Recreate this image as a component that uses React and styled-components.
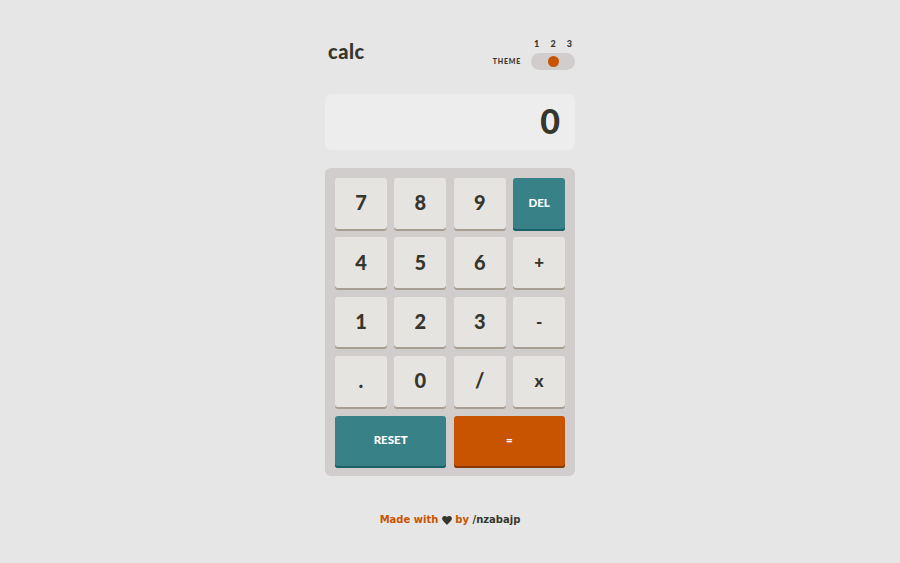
import React from 'react'
import styled, { createGlobalStyle } from 'styled-components'

const GlobalStyle = createGlobalStyle`
    html, body {
        margin: 0;
        padding: 0;
        height: 100%;
        background: #e6e6e6;
    }
    * {
        box-sizing: border-box;
    }
`

const KEYS = [
    { label: '7' }, { label: '8' }, { label: '9' }, { label: 'DEL', variant: 'teal' },
    { label: '4' }, { label: '5' }, { label: '6' }, { label: '+', small: true },
    { label: '1' }, { label: '2' }, { label: '3' }, { label: '-', small: true },
    { label: '.' }, { label: '0' }, { label: '/' }, { label: 'x', small: true },
    { label: 'RESET', variant: 'teal', wide: true }, { label: '=', variant: 'orange', wide: true },
]

const App = () => {
    return (
        <Page>
            <GlobalStyle />
            <Calculator>
                <Header>
                    <Logo>calc</Logo>
                    <ThemeBlock>
                        <ThemeLabel>THEME</ThemeLabel>
                        <SwitchColumn>
                            <Numbers>
                                <span>1</span>
                                <span>2</span>
                                <span>3</span>
                            </Numbers>
                            <Track>
                                <Thumb />
                            </Track>
                        </SwitchColumn>
                    </ThemeBlock>
                </Header>
                <Screen>0</Screen>
                <Keypad>
                    {KEYS.map(k => (
                        <Key key={k.label} $variant={k.variant} $wide={k.wide} $small={k.small}>
                            {k.label}
                        </Key>
                    ))}
                </Keypad>
            </Calculator>
            <Footer>
                <span>Made with</span>
                <svg width="10" height="9" viewBox="0 0 24 22" aria-hidden="true">
                    <path
                        fill="#36362c"
                        d="M12 21.500 10.300 20C4.200 14.500 0 10.700 0 6.400 0 2.900 2.800 0 6.500 0 8.600 0 10.700 1 12 2.500 13.300 1 15.400 0 17.500 0 21.200 0 24 2.900 24 6.400 24 10.700 19.800 14.500 13.700 20Z"
                    />
                </svg>
                <span>by <Handle>/nzabajp</Handle></span>
            </Footer>
        </Page>
    )
}

export default App

const Page = styled.div`
    min-height: 563px;
    display: flex;
    flex-direction: column;
    align-items: center;
    padding-top: 38px;
    background: #e6e6e6;
`

const Calculator = styled.div`
    width: 250px;
    display: flex;
    flex-direction: column;
`

const Header = styled.div`
    display: flex;
    justify-content: space-between;
    align-items: flex-start;
    height: 56px;
    padding-left: 3px;
`

const Logo = styled.div`
    font-family: 'Lato', sans-serif;
    font-weight: 900;
    font-size: 20px;
    letter-spacing: 0.5px;
    line-height: 28px;
    color: #36362c;
    margin-top: -1px;
`

const ThemeBlock = styled.div`
    display: flex;
    align-items: flex-end;
    gap: 10px;
`

const ThemeLabel = styled.div`
    font-family: 'Lato', sans-serif;
    font-weight: 900;
    font-size: 7px;
    letter-spacing: 0.8px;
    line-height: 10px;
    color: #36362c;
    margin-bottom: 4px;
`

const SwitchColumn = styled.div`
    display: flex;
    flex-direction: column;
    width: 44px;
    gap: 3px;
`

const Numbers = styled.div`
    display: flex;
    justify-content: space-between;
    padding: 0 3px;
    font-family: 'Lato', sans-serif;
    font-weight: 900;
    font-size: 9px;
    line-height: 12px;
    color: #36362c;
`

const Track = styled.div`
    height: 17px;
    border-radius: 9px;
    background: #d2cdcd;
    display: flex;
    align-items: center;
    justify-content: center;
`

const Thumb = styled.div`
    width: 11px;
    height: 11px;
    border-radius: 50%;
    background: #c85402;
`

const Screen = styled.div`
    height: 56px;
    border-radius: 6px;
    background: #ededed;
    color: #36362c;
    font-family: 'Lato', sans-serif;
    font-weight: 900;
    font-size: 34px;
    display: flex;
    align-items: center;
    justify-content: flex-end;
    padding: 0 15px 3px 0;
`

const Keypad = styled.div`
    margin-top: 18px;
    height: 308px;
    padding: 10px;
    border-radius: 6px;
    background: #d2cdcd;
    display: grid;
    grid-template-columns: repeat(4, 1fr);
    grid-auto-rows: 52.5px;
    row-gap: 6.9px;
    column-gap: 7.5px;
`

const keyColours = {
    teal: { bg: '#378187', shadow: '#1b6066', fg: '#ffffff' },
    orange: { bg: '#c85402', shadow: '#873901', fg: '#ffffff' },
    plain: { bg: '#e5e4e1', shadow: '#a79e91', fg: '#36362c' },
}

const Key = styled.button`
    border: none;
    padding: 0 0 4px;
    border-radius: 3px;
    grid-column: ${p => (p.$wide ? 'span 2' : 'auto')};
    background: ${p => keyColours[p.$variant || 'plain'].bg};
    color: ${p => keyColours[p.$variant || 'plain'].fg};
    box-shadow: inset 0 -2px 0 ${p => keyColours[p.$variant || 'plain'].shadow};
    font-family: 'Lato', sans-serif;
    font-weight: 900;
    font-size: ${p => (p.$variant ? '11.5px' : p.$small ? '17px' : '20px')};
    display: flex;
    align-items: center;
    justify-content: center;
`

const Footer = styled.div`
    margin-top: 37px;
    font-family: 'DejaVu Sans', sans-serif;
    font-weight: 700;
    font-size: 10px;
    line-height: 14px;
    color: #c85402;
    display: flex;
    align-items: center;
    gap: 3.5px;
`

const Handle = styled.span`
    color: #36362c;
`
